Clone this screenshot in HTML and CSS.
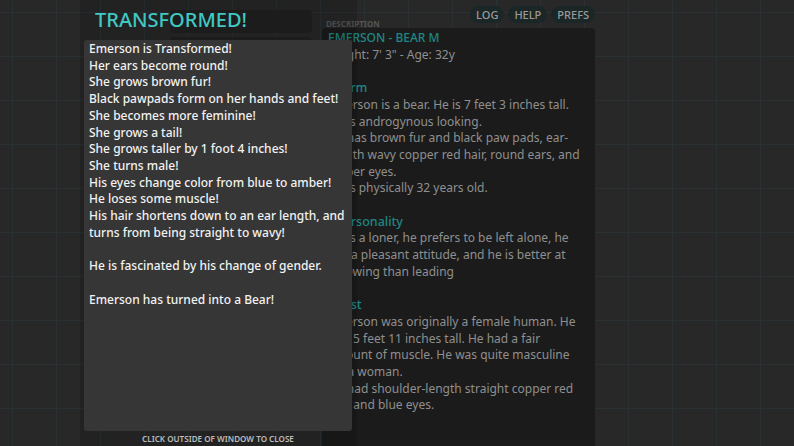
FILE: index.html
```html
<!DOCTYPE html>
<html>
<head>
<meta charset="utf-8">
<link rel="stylesheet" href="styles.css">
</head>
<body>
<div class="app">
  <aside class="left">
    <div class="namebox"></div>
    <div class="subbox"></div>
  </aside>
  <main class="right">
    <header class="topbar">
      <span class="label">DESCRIPTION</span>
      <nav class="btns">
        <span class="pill">LOG</span>
        <span class="pill">HELP</span>
        <span class="pill">PREFS</span>
      </nav>
    </header>
    <section class="desc">
      <h2>EMERSON - BEAR M</h2>
      <p>Height: 7' 3" - Age: 32y</p>
      <h2 class="sec">Form</h2>
      <p>Emerson is a bear. He is 7 feet 3 inches tall.<br>He is androgynous looking.<br>He has brown fur and black paw pads, ear-<br>length wavy copper red hair, round ears, and<br>amber eyes.<br>He is physically 32 years old.</p>
      <h2 class="sec">Personality</h2>
      <p>He is a loner, he prefers to be left alone, he<br>has a pleasant attitude, and he is better at<br>following than leading</p>
      <h2 class="sec">Past</h2>
      <p>Emerson was originally a female human. He<br>was 5 feet 11 inches tall. He had a fair<br>amount of muscle. He was quite masculine<br>for a woman.<br>He had shoulder-length straight copper red<br>hair and blue eyes.</p>
    </section>
  </main>
</div>
<div class="window-layer">
  <h1 class="title">TRANSFORMED!</h1>
  <div class="modal">
    <p>Emerson is Transformed!<br>Her ears become round!<br>She grows brown fur!<br>Black pawpads form on her hands and feet!<br>She becomes more feminine!<br>She grows a tail!<br>She grows taller by 1 foot 4 inches!<br>She turns male!<br>His eyes change color from blue to amber!<br>He loses some muscle!<br>His hair shortens down to an ear length, and<br>turns from being straight to wavy!</p>
    <p>He is fascinated by his change of gender.</p>
    <p>Emerson has turned into a Bear!</p>
  </div>
  <div class="caption">CLICK OUTSIDE OF WINDOW TO CLOSE</div>
</div>
</body>
</html>
```
FILE: styles.css
```css
html, body {
  margin: 0;
  padding: 0;
}
body {
  width: 794px;
  height: 446px;
  overflow: hidden;
  position: relative;
  font-family: "Noto Sans", "Open Sans", sans-serif;
  background-color: #282828;
  background-image:
    linear-gradient(to right, #293134 1px, transparent 1px),
    linear-gradient(to bottom, #293134 1px, transparent 1px);
  background-size: 44px 44px;
  background-position: 12px 12px;
}
.app {
  display: flex;
  height: 446px;
  padding-left: 80px;
  box-sizing: border-box;
}
.left {
  width: 242px;
  flex: none;
  display: flex;
  flex-direction: column;
  align-items: flex-start;
  gap: 4px;
  padding: 10px 0 0 90px;
  box-sizing: border-box;
}
.namebox {
  width: 142px;
  height: 23px;
  background: #212121;
  border-radius: 4px;
}
.subbox {
  width: 142px;
  height: 40px;
  background: #212121;
  border-radius: 4px;
}
.right {
  width: 273px;
  flex: none;
  display: flex;
  flex-direction: column;
}
.topbar {
  height: 28px;
  display: flex;
  justify-content: space-between;
  align-items: flex-start;
  padding-left: 4px;
}
.label {
  margin-top: 19px;
  font-size: 8px;
  line-height: 10px;
  font-weight: 700;
  color: #555;
}
.btns {
  display: flex;
  gap: 4px;
  margin-top: 6px;
}
.pill {
  height: 17px;
  line-height: 17px;
  padding: 0 6px;
  border-radius: 9px;
  background: #1b2627;
  color: #9a9a9a;
  font-size: 11px;
  font-weight: 500;
}
.desc {
  flex: 1;
  background: #1b1b1b;
  border-radius: 4px 4px 0 0;
  padding: 2px 6px;
  font-size: 12px;
  line-height: 16.7px;
  font-weight: 450;
  color: #8f8f8f;
  white-space: nowrap;
}
.desc h2 {
  margin: 0;
  font-size: 12px;
  font-weight: 500;
  color: #1f8783;
}
.desc h2.sec {
  margin-top: 16.7px;
  padding-left: 8px;
  font-size: 12.5px;
}
.desc p {
  margin: 0;
}
.window-layer {
  position: absolute;
  left: 80px;
  top: 0;
  width: 277px;
  height: 446px;
  background: rgba(0, 0, 0, 0.13);
  display: flex;
  flex-direction: column;
  padding: 0 5px 0 4px;
  box-sizing: border-box;
}
.title {
  margin: 0;
  height: 40px;
  line-height: 40px;
  padding-left: 11px;
  font-size: 20px;
  font-weight: 500;
  color: #40c8c3;
}
.modal {
  height: 391px;
  flex: none;
  box-sizing: border-box;
  background: #363636;
  border-radius: 3px;
  padding: 1px 5px;
  color: #f2f2f2;
  font-size: 12px;
  line-height: 16.7px;
  font-weight: 500;
}
.modal p {
  margin: 0 0 16.7px;
}
.caption {
  flex: 1;
  text-align: center;
  font-size: 8.1px;
  line-height: 15px;
  font-weight: 600;
  color: #bdbdbd;
}
```
